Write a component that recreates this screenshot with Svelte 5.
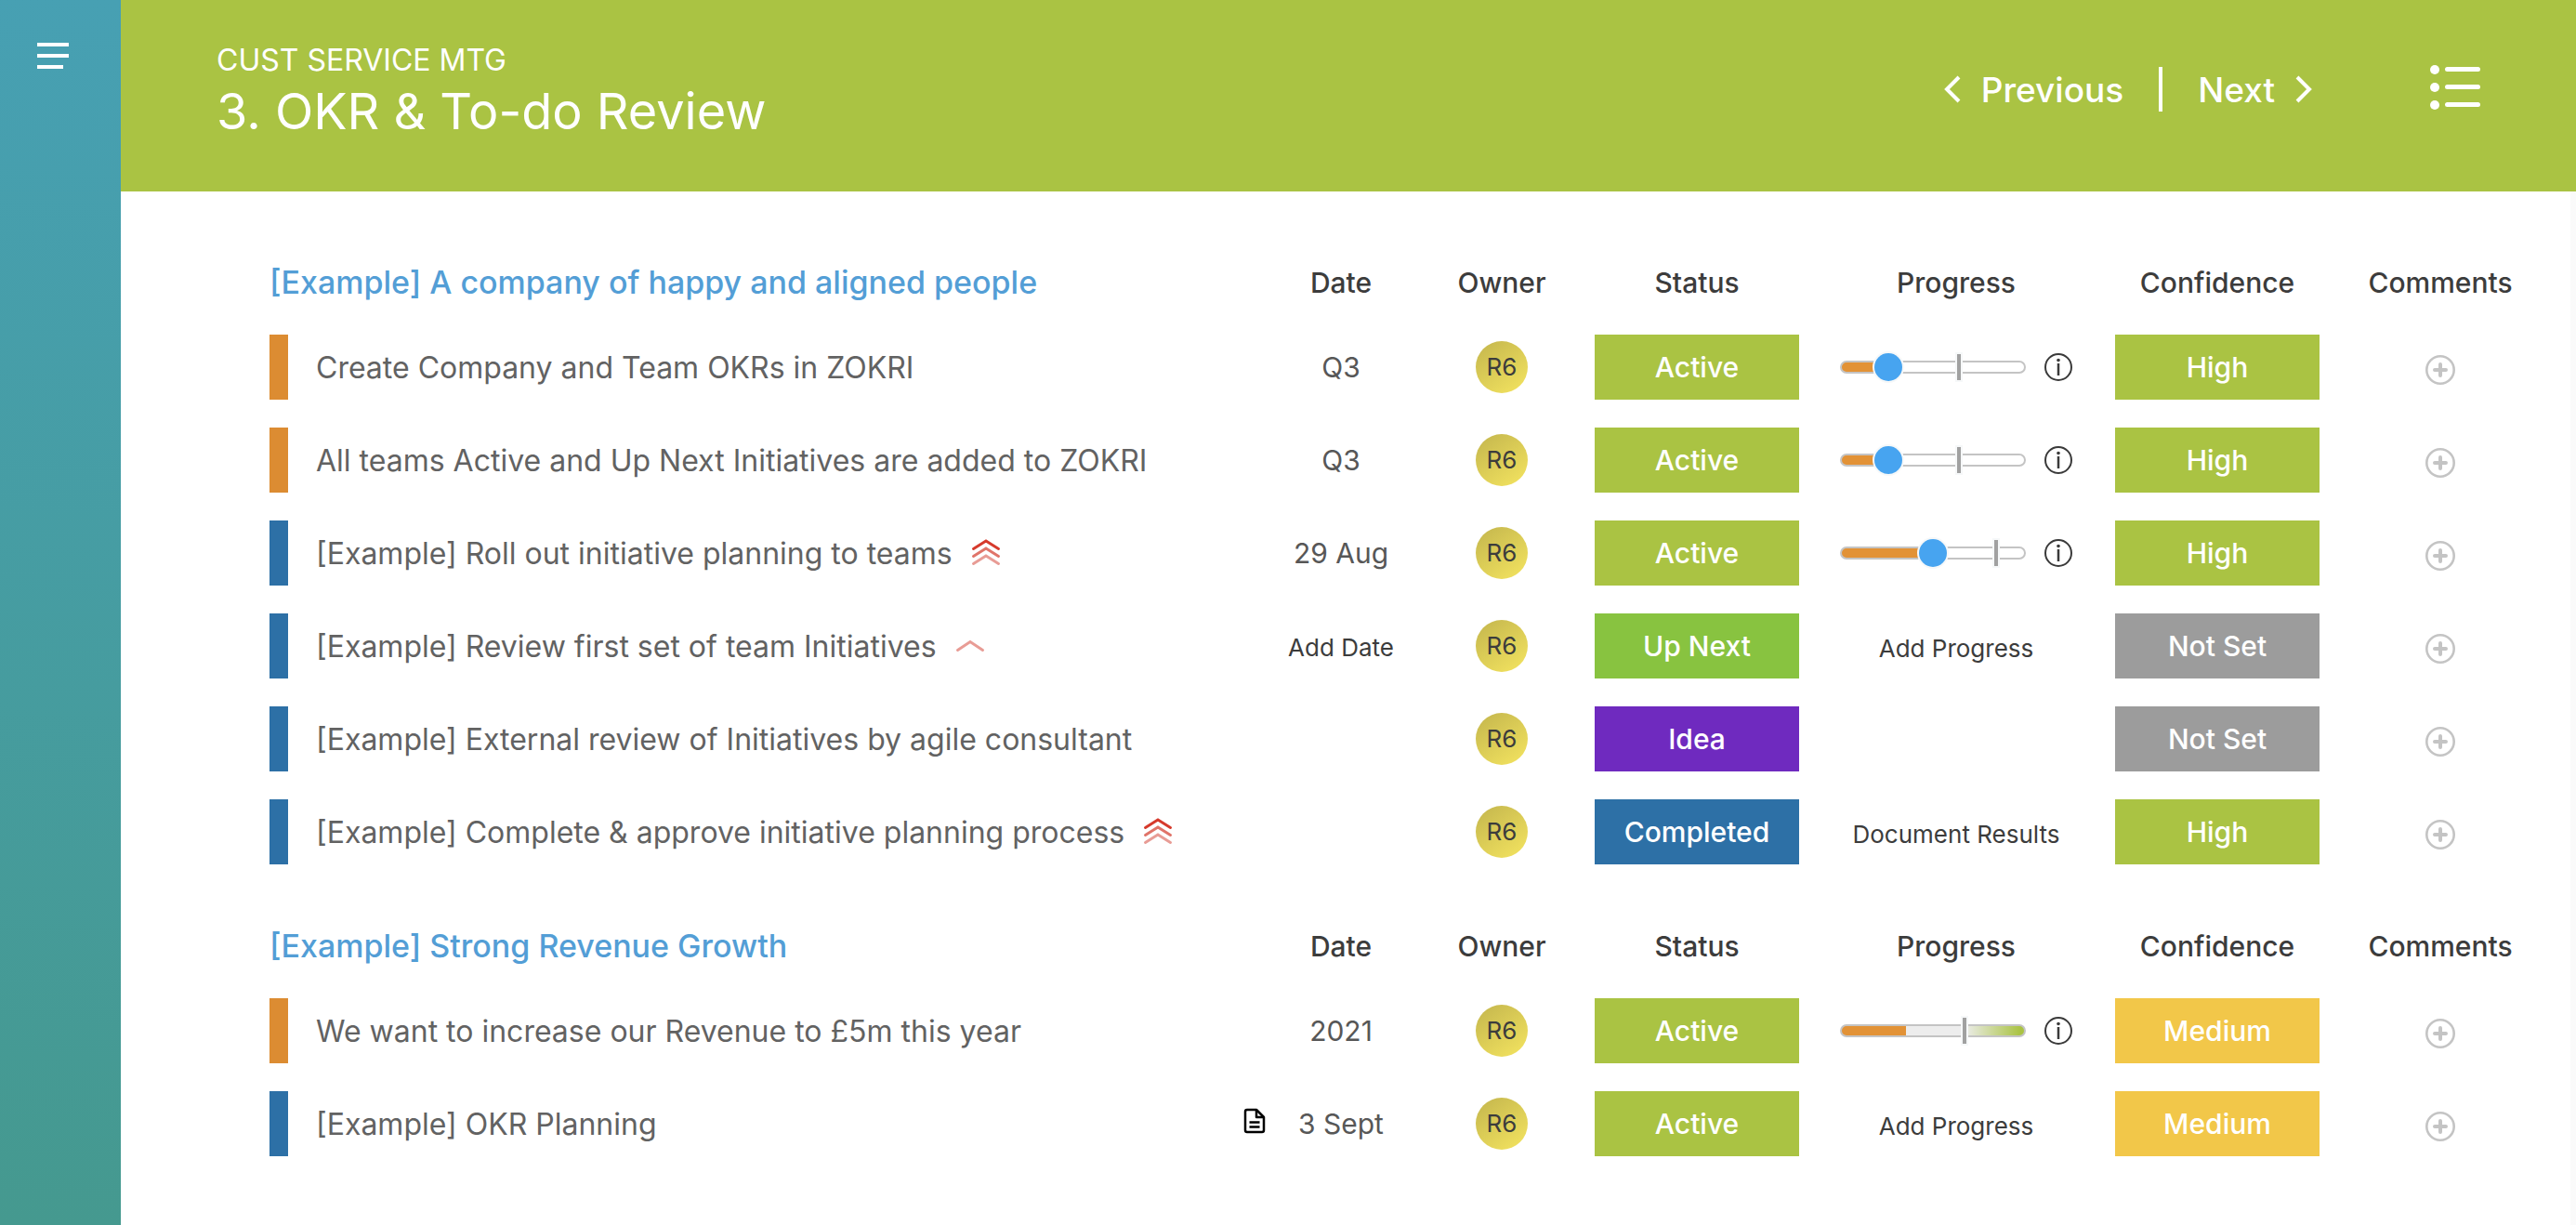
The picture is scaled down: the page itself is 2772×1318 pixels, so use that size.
<script>
  const groups = [
    {
      title: '[Example] A company of happy and aligned people',
      rows: [
        { type: 'key', name: 'Create Company and Team OKRs in ZOKRI', date: 'Q3', status: 'Active', value: 21, target: 64, confidence: 'High' },
        { type: 'key', name: 'All teams Active and Up Next Initiatives are added to ZOKRI', date: 'Q3', status: 'Active', value: 21, target: 64, confidence: 'High' },
        { type: 'todo', name: '[Example] Roll out initiative planning to teams', priority: 3, date: '29 Aug', status: 'Active', value: 50, target: 84, confidence: 'High' },
        { type: 'todo', name: '[Example] Review first set of team Initiatives', priority: 1, addDate: true, status: 'Up Next', action: 'Add Progress', confidence: 'Not Set' },
        { type: 'todo', name: '[Example] External review of Initiatives by agile consultant', status: 'Idea', confidence: 'Not Set' },
        { type: 'todo', name: '[Example] Complete & approve initiative planning process', priority: 3, status: 'Completed', action: 'Document Results', confidence: 'High' },
      ],
    },
    {
      title: '[Example] Strong Revenue Growth',
      rows: [
        { type: 'key', name: 'We want to increase our Revenue to £5m this year', date: '2021', status: 'Active', value: 35, target: 67, locked: true, confidence: 'Medium' },
        { type: 'todo', name: '[Example] OKR Planning', note: true, date: '3 Sept', status: 'Active', action: 'Add Progress', confidence: 'Medium' },
      ],
    },
  ];

  const slug = (s) => s.toLowerCase().replace(' ', '-');
</script>

<div class="layout">
  <aside class="sidebar">
    <button class="icon-btn" aria-label="Menu">
      <svg width="34" height="28" viewBox="0 0 34 28" fill="#fff">
        <rect width="34" height="4" />
        <rect y="12" width="34" height="4" />
        <rect y="24" width="28" height="4" />
      </svg>
    </button>
  </aside>

  <div class="page">
    <header class="topbar">
      <div class="heading">
        <div class="meeting">CUST SERVICE MTG</div>
        <h1>3. OKR &amp; To-do Review</h1>
      </div>

      <nav class="steps">
        <button class="step">
          <svg width="18" height="30" viewBox="0 0 18 30" fill="none" stroke="#fff" stroke-width="4"><path d="M16 2 3 15l13 13" /></svg>
          <span>Previous</span>
        </button>
        <span class="divider"></span>
        <button class="step">
          <span>Next</span>
          <svg width="18" height="30" viewBox="0 0 18 30" fill="none" stroke="#fff" stroke-width="4"><path d="m2 2 13 13L2 28" /></svg>
        </button>
      </nav>

      <button class="icon-btn" aria-label="Agenda">
        <svg width="54" height="48" viewBox="0 0 54 48" fill="#fff">
          {#each [5, 24, 43] as y}
            <circle cx="5" cy={y} r="5" />
            <rect x="16" y={y - 3} width="38" height="5" rx="2.5" />
          {/each}
        </svg>
      </button>
    </header>

    <main>
      <table>
        <colgroup>
          <col />
          <col class="c-date" />
          <col class="c-owner" />
          <col class="c-status" />
          <col class="c-progress" />
          <col class="c-confidence" />
          <col class="c-comments" />
        </colgroup>
        {#each groups as group}
          <tbody>
            <tr class="group-head">
              <th scope="col" class="group-title">{group.title}</th>
              <th scope="col">Date</th>
              <th scope="col">Owner</th>
              <th scope="col">Status</th>
              <th scope="col">Progress</th>
              <th scope="col">Confidence</th>
              <th scope="col">Comments</th>
            </tr>
            {#each group.rows as row}
              <tr>
                <td>
                  <div class="name {row.type}">
                    <span>{row.name}</span>
                    {#if row.priority}
                      <svg class="priority" width="32" height="30" viewBox="0 0 32 30" fill="none" stroke-width="3" stroke-linecap="round">
                        {#if row.priority === 3}
                          <path d="m2.500 10.500 13.500-8.500 13.500 8.500" stroke="#d63a2c" />
                          <path d="m2.500 18.500 13.500-8.500 13.500 8.500" stroke="#e07469" />
                          <path d="m2.500 26.500 13.500-8.500 13.500 8.500" stroke="#e89c95" />
                        {:else}
                          <path d="m2.500 19.500 13.500-9 13.500 9" stroke="#e89c95" />
                        {/if}
                      </svg>
                    {/if}
                    {#if row.note}
                      <button class="icon-btn note" aria-label="Note">
                        <svg width="24" height="28" viewBox="0 0 24 28" fill="none" stroke="#000" stroke-width="2.500" stroke-linejoin="round">
                          <path d="M14 2H4a2 2 0 0 0-2 2v20a2 2 0 0 0 2 2h16a2 2 0 0 0 2-2V10z" />
                          <path d="M14 2v8h8M6.500 15.500h11M6.500 20.500h11" />
                        </svg>
                      </button>
                    {/if}
                  </div>
                </td>
                <td class="date">
                  {#if row.addDate}
                    <button class="link">Add Date</button>
                  {:else}
                    {row.date ?? ''}
                  {/if}
                </td>
                <td><span class="avatar">R6</span></td>
                <td><button class="badge {slug(row.status)}">{row.status}</button></td>
                <td>
                  {#if row.value}
                    <div class="progress">
                      <div class="track-wrap" style="--value: {row.value}%; --target: {row.target}%">
                        {#if row.locked}
                          <div class="bar" role="progressbar" aria-label="Progress" aria-valuenow={row.value}></div>
                        {:else}
                          <input type="range" min="0" max="100" value={row.value} aria-label="Progress of {row.name}" />
                        {/if}
                        <span class="target"></span>
                      </div>
                      <button class="icon-btn" aria-label="Info">
                        <svg width="30" height="30" viewBox="0 0 30 30" fill="none" stroke="#3a3a3a">
                          <circle cx="15" cy="15" r="14" stroke-width="2" />
                          <path d="M15 11v13" stroke-width="2.500" />
                          <circle cx="15" cy="7.500" r="1.800" fill="#3a3a3a" stroke="none" />
                        </svg>
                      </button>
                    </div>
                  {:else if row.action}
                    <button class="link">{row.action}</button>
                  {/if}
                </td>
                <td><button class="badge {slug(row.confidence)}">{row.confidence}</button></td>
                <td>
                  <button class="icon-btn comment" aria-label="Add comment">
                    <svg width="32" height="32" viewBox="0 0 32 32" fill="none" stroke="#c4c4c4">
                      <circle cx="16" cy="16" r="14.700" stroke-width="2.600" />
                      <path d="M16 10v12M10 16h12" stroke-width="4" stroke-linecap="round" />
                    </svg>
                  </button>
                </td>
              </tr>
            {/each}
          </tbody>
        {/each}
      </table>
    </main>
  </div>
</div>

<style>
  :global(body) {
    background: #fff;
  }

  .layout {
    display: flex;
    min-height: 100vh;
    font-family: Inter, 'Open Sans', sans-serif;
    color: #3c3c3c;
  }

  .sidebar {
    flex: 0 0 130px;
    box-sizing: border-box;
    padding: 46px 40px;
    background: linear-gradient(184deg, #47a0b3, #45998f);
  }

  .page {
    display: flex;
    flex-direction: column;
    flex: 1;
    min-width: 0;
  }

  button {
    font: inherit;
    color: inherit;
    border: none;
    background: none;
    padding: 0;
    cursor: pointer;
  }

  svg {
    display: block;
    flex: none;
  }

  .icon-btn {
    display: block;
  }

  .topbar {
    display: flex;
    align-items: flex-start;
    box-sizing: border-box;
    height: 206px;
    padding: 44px 103px 0;
    background: #aac343;
    color: #fff;
  }

  .heading {
    flex: 1;
  }

  .meeting {
    font-size: 32px;
    line-height: 42px;
  }

  h1 {
    margin: 0;
    font-size: 54px;
    font-weight: 400;
    line-height: 68px;
  }

  .steps {
    display: flex;
    align-items: center;
    gap: 38px;
    height: 104px;
    margin-right: 127px;
  }

  .topbar > .icon-btn {
    margin-top: 26px;
  }

  .step {
    display: flex;
    align-items: center;
    gap: 22px;
    font-size: 37px;
    font-weight: 500;
  }

  .divider {
    width: 4px;
    height: 48px;
    background: #fff;
  }

  main {
    flex: 1;
    padding: 25px 20px 40px 160px;
    border-right: 6px solid #fafafa;
  }

  table {
    width: 100%;
    table-layout: fixed;
    border-collapse: collapse;
  }

  .c-date { width: 162px; }
  .c-owner { width: 184px; }
  .c-status { width: 236px; }
  .c-progress { width: 322px; }
  .c-confidence { width: 240px; }
  .c-comments { width: 240px; }

  th, td {
    padding: 0;
    text-align: center;
  }

  .group-head th {
    height: 34px;
    padding: 56px 0 24px;
    font-size: 30px;
    font-weight: 500;
    line-height: 34px;
  }

  .group-head .group-title {
    font-size: 34px;
    text-align: left;
    color: #539ed6;
  }

  td {
    height: 100px;
    font-size: 32px;
    color: #626262;
  }

  .name {
    display: flex;
    align-items: center;
    height: 70px;
    padding-left: 30px;
    border-left: 20px solid #2d70a6;
    text-align: left;
    white-space: nowrap;
  }

  .name.key {
    border-color: #dc8c32;
  }

  .priority {
    margin-left: 20px;
  }

  .note {
    margin: 0 0 6px auto;
  }

  .date {
    font-size: 30px;
    color: #575757;
  }

  .link {
    font-size: 26px;
    color: #3c3c3c;
    white-space: nowrap;
  }

  .avatar {
    display: block;
    width: 56px;
    margin: 0 auto;
    border-radius: 50%;
    background: linear-gradient(145deg, #c3b54d, #f5e560);
    color: #3c3c3c;
    font-size: 26px;
    line-height: 56px;
  }

  .badge {
    width: 220px;
    height: 70px;
    background: #aac343;
    color: #fff;
    font-size: 30px;
    font-weight: 500;
  }

  .badge.up-next { background: #88c340; }
  .badge.idea { background: #6f2abf; }
  .badge.completed { background: #2d70a6; }
  .badge.not-set { background: #9c9c9c; }
  .badge.medium { background: #f2c749; }

  .progress {
    display: flex;
    align-items: center;
    justify-content: center;
    gap: 20px;
  }

  .track-wrap {
    position: relative;
    display: flex;
    align-items: center;
    width: 200px;
    height: 32px;
  }

  input[type='range'] {
    appearance: none;
    width: 100%;
    height: 32px;
    margin: 0;
    background: none;
  }

  input[type='range']::-webkit-slider-runnable-track {
    box-sizing: border-box;
    height: 14px;
    border: 2px solid #c4c4c4;
    border-radius: 7px;
    background: linear-gradient(to right, #e29236 var(--value), #fff 0);
  }

  input[type='range']::-webkit-slider-thumb {
    appearance: none;
    width: 30px;
    height: 30px;
    margin-top: -10px;
    border: none;
    border-radius: 50%;
    background: #47a4f0;
    box-shadow: 0 0 0 2px #f6f8f9;
  }

  .bar {
    box-sizing: border-box;
    width: 100%;
    height: 14px;
    border: 2px solid #c4c4c4;
    border-radius: 7px;
    background: linear-gradient(to right, #e29236 var(--value), #ededed 0, #ededed var(--target), #aac343 98%);
  }

  .target {
    position: absolute;
    left: var(--target);
    top: 0;
    width: 4px;
    height: 28px;
    margin-left: -4px;
    border: 2px solid #f6f8f9;
    background: #a1a1a1;
  }

  .comment {
    margin: 6px auto 0;
  }
</style>
